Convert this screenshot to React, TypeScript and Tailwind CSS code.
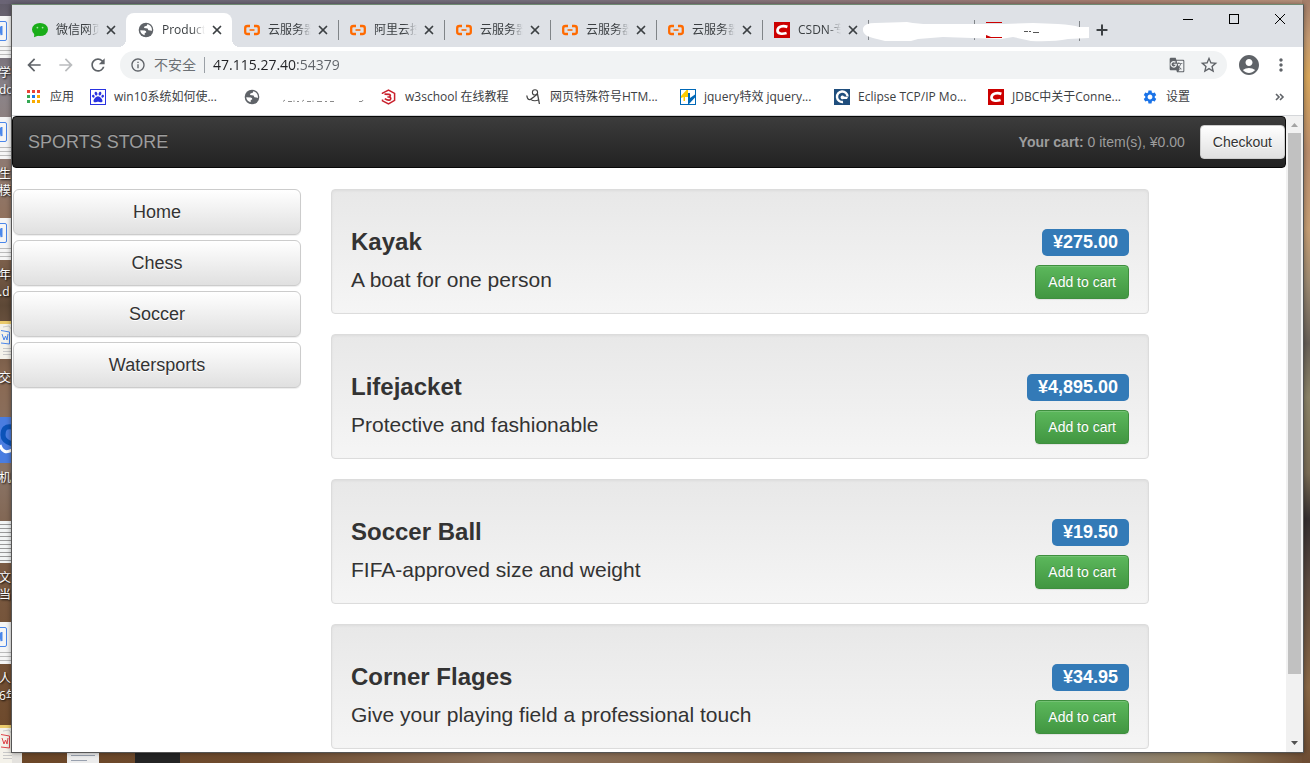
import type { ReactNode } from 'react';
import { FaPaw } from 'react-icons/fa';
import {
  MdAccountCircle,
  MdArrowBack,
  MdArrowForward,
  MdGTranslate,
  MdInfoOutline,
  MdMoreVert,
  MdRefresh,
  MdSettings,
  MdStarBorder,
} from 'react-icons/md';
import { Plus, X } from 'lucide-react';

interface Tab {
  title: string;
  icon: ReactNode;
  active?: boolean;
  divider?: boolean;
  hidden?: boolean;
}

interface Bookmark {
  title: string;
  icon: ReactNode;
  width: string;
}

interface Product {
  name: string;
  description: string;
  price: string;
}

function WeChatIcon() {
  return (
    <svg viewBox="0 0 16 16" className="w-4 h-4 flex-shrink-0">
      <ellipse cx="8" cy="7.5" rx="8" ry="6.6" fill="#1aad19" />
      <path d="M2.5 11 L2 15.2 L6.5 13.5 Z" fill="#1aad19" />
      <circle cx="5.4" cy="5.6" r="0.9" fill="#a9e5a8" />
      <circle cx="10.6" cy="5.6" r="0.9" fill="#a9e5a8" />
    </svg>
  );
}

function GlobeIcon() {
  return (
    <svg viewBox="0 0 16 16" className="w-4 h-4 flex-shrink-0">
      <circle cx="8" cy="8" r="7.3" fill="#5f6368" />
      <path d="M2.2 8.2 L6.8 8.4 Q8.6 8.8 8.2 10.6 L6.8 11 L6.6 13.2 C4.2 12.6 2.400 10.600 2.200 8.200 Z" fill="#fff" />
      <path d="M9.2 2.300 L8.8 3.8 L6.4 4.4 L6 6 L9.6 6.400 L10.4 8.2 L12.4 8.400 L13.8 9 C14.500 5.600 12.400 2.800 9.200 2.300 Z" fill="#fff" />
    </svg>
  );
}

function AliyunIcon() {
  return (
    <svg viewBox="0 0 16 16" className="w-4 h-4 flex-shrink-0" fill="none" stroke="#ff6a00">
      <path d="M6 4 H3.500 Q1.200 4 1.200 6 V10 Q1.200 12 3.500 12 H6 M10 4 H12.500 Q14.800 4 14.800 6 V10 Q14.800 12 12.500 12 H10" strokeWidth="2.3" />
      <path d="M5.5 8 H10.500" strokeWidth="1.6" />
    </svg>
  );
}

function CsdnIcon() {
  return (
    <svg viewBox="0 0 16 16" className="w-4 h-4 flex-shrink-0">
      <rect width="16" height="16" fill="#c00" />
      <path d="M13.4 4.900 C9 3.400 3.900 4.200 3.500 8.200 C3.300 12 8 12.400 12.600 11" fill="none" stroke="#fff" strokeWidth="2.7" />
    </svg>
  );
}

function AppsIcon() {
  const colors = ['#ea4335', '#ea4335', '#ea4335', '#34a853', '#1a73e8', '#f9ab00', '#34a853', '#f9ab00', '#f9ab00'];
  return (
    <svg viewBox="0 0 16 16" className="w-4 h-4 flex-shrink-0">
      {colors.map((color, i) => (
        <rect key={i} x={1 + (i % 3) * 5} y={1 + Math.floor(i / 3) * 5} width="3" height="3" fill={color} />
      ))}
    </svg>
  );
}

function BaiduIcon() {
  return (
    <span className="w-4 h-4 flex-shrink-0 border border-[#2932e1] bg-white flex items-center justify-center">
      <FaPaw className="w-3 h-3 text-[#2932e1]" />
    </span>
  );
}

function W3Icon() {
  return (
    <svg viewBox="0 0 16 16" className="w-4 h-4 flex-shrink-0" fill="none" stroke="#c9202c">
      <path d="M1.500 5 V4.200 L7.500 1 L13.600 4.400 V11.400 L7.500 15 L1.500 11.800 V10.500" strokeWidth="1.500" />
      <path d="M3.500 5.200 L8 5.400 Q10.200 6 8.800 7.800 L6.400 8 M8.400 7.900 Q10.800 9 9 11 Q6.600 11.800 3.800 9.600" strokeWidth="1.700" />
    </svg>
  );
}

function DoodleIcon() {
  return (
    <svg viewBox="0 0 16 16" className="w-4 h-4 flex-shrink-0" fill="none" stroke="#444">
      <circle cx="9" cy="3.400" r="2.600" strokeWidth="1.1" />
      <path d="M0.800 6.500 Q1.500 11.500 4.500 10.400 Q8.500 8 11.400 4.600 Q12.400 9 13.400 15" strokeWidth="1.300" />
      <path d="M4.500 10.400 Q8.500 13 12.800 10.800" strokeWidth="1.1" />
    </svg>
  );
}

function JqueryIcon() {
  return (
    <svg viewBox="0 0 16 16" className="w-4 h-4 flex-shrink-0">
      <rect x="0.5" y="0.5" width="15" height="15" fill="#fff" stroke="#0068b7" />
      <path d="M1 9 V7 L6.500 1 H8 V8 H5 V12 H3.500 V8 Z" fill="#fc0" />
      <path d="M8 4 H10 V9 L15 5.500 V8.500 L9 15 H8 Z" fill="#0068b7" />
    </svg>
  );
}

function EclipseIcon() {
  return (
    <svg viewBox="0 0 16 16" className="w-4 h-4 flex-shrink-0">
      <rect width="16" height="16" fill="#1f4e7d" />
      <path d="M13.600 7.500 A5.300 5.300 0 1 0 9 13" fill="none" stroke="#fff" strokeWidth="2.400" />
      <path d="M6.600 8 A1.900 1.900 0 0 1 10 7.400 L14 8 L13 10 H9.500 A1.900 1.900 0 0 1 6.600 8 Z" fill="#fff" />
    </svg>
  );
}

const tabs: Tab[] = [
  { title: '微信网页版', icon: <WeChatIcon /> },
  { title: 'Products', icon: <GlobeIcon />, active: true },
  { title: '云服务器', icon: <AliyunIcon /> },
  { title: '阿里云控制', icon: <AliyunIcon />, divider: true },
  { title: '云服务器', icon: <AliyunIcon />, divider: true },
  { title: '云服务器', icon: <AliyunIcon />, divider: true },
  { title: '云服务器', icon: <AliyunIcon />, divider: true },
  { title: 'CSDN-专业', icon: <CsdnIcon />, divider: true },
  { title: '', icon: null, divider: true, hidden: true },
  { title: '', icon: null, divider: true, hidden: true },
];

const bookmarks: Bookmark[] = [
  { title: '应用', icon: <AppsIcon />, width: 'w-16' },
  { title: 'win10系统如何使...', icon: <BaiduIcon />, width: 'w-[154px]' },
  { title: '', icon: <GlobeIcon />, width: 'w-[137px]' },
  { title: 'w3school 在线教程', icon: <W3Icon />, width: 'w-[145px]' },
  { title: '网页特殊符号HTM...', icon: <DoodleIcon />, width: 'w-[154px]' },
  { title: 'jquery特效 jquery...', icon: <JqueryIcon />, width: 'w-[154px]' },
  { title: 'Eclipse TCP/IP Mo...', icon: <EclipseIcon />, width: 'w-[154px]' },
  { title: 'JDBC中关于Conne...', icon: <CsdnIcon />, width: 'w-[154px]' },
  { title: '设置', icon: <MdSettings className="w-4 h-4 flex-shrink-0 text-[#1a73e8]" />, width: 'w-16' },
];

const categories = ['Home', 'Chess', 'Soccer', 'Watersports'];

const products: Product[] = [
  { name: 'Kayak', description: 'A boat for one person', price: '¥275.00' },
  { name: 'Lifejacket', description: 'Protective and fashionable', price: '¥4,895.00' },
  { name: 'Soccer Ball', description: 'FIFA-approved size and weight', price: '¥19.50' },
  { name: 'Corner Flages', description: 'Give your playing field a professional touch', price: '¥34.95' },
];

// Desktop shortcuts peeking out from behind the window, y is the top of the icon
const shortcuts = [
  { y: 16, kind: 'word', lines: ['学', 'do'] },
  { y: 117, kind: 'word', lines: ['生登', '模板'] },
  { y: 218, kind: 'word', lines: ['年', '.d'] },
  { y: 321, kind: 'folder', lines: ['交'] },
  { y: 417, kind: 'app', lines: ['机'] },
  { y: 521, kind: 'text', lines: ['文', '当.t'] },
  { y: 622, kind: 'word', lines: ['人总', '6年'] },
  { y: 725, kind: 'pdf', lines: [] },
];

function ShortcutIcon({ kind }: { kind: string }) {
  if (kind === 'word') {
    return (
      <svg width="12" height="42" fill="none">
        <rect width="12" height="42" fill="#f5f5f5" />
        <path d="M0 5.5 H5 Q6.500 5.500 6.500 7 V23 Q6.500 24.500 5 24.500 H0" stroke="#4b87ea" />
        <path d="M0 11 L1.500 19 V10" stroke="#4b87ea" strokeWidth="2" />
        <path d="M0 30.500 H12 M0 34.500 H12 M0 38.500 H12" stroke="#bbb" />
      </svg>
    );
  }
  if (kind === 'text') {
    return (
      <svg width="12" height="42">
        <rect width="12" height="42" fill="#f2f4f4" />
        <path d="M0 3.5 H12 M0 7.500 H12 M0 11.500 H12 M0 15.500 H12 M0 19.500 H12 M0 23.500 H12 M0 27.500 H12 M0 31.500 H12 M0 35.500 H12 M0 39.500 H12" stroke="#999" />
      </svg>
    );
  }
  if (kind === 'app') {
    return (
      <svg width="12" height="46" fill="none">
        <rect width="12" height="46" fill="#4a7de0" />
        <path d="M12 10 Q3 8 3 18 Q3 24 12 27" stroke="#0b53b8" strokeWidth="5" />
        <path d="M0 28 Q3 38 12 33" stroke="#fff" strokeWidth="3" />
      </svg>
    );
  }
  const color = kind === 'pdf' ? '#e0454b' : '#4b87ea';
  return (
    <svg width="12" height="42" fill="none">
      <rect width="12" height="38" fill="#f4f2ea" />
      <rect width="12" height="3" fill="#ebcb6c" />
      <path d="M3 6 L9 5 L12 9" stroke="#ccc" />
      <path d="M1 9.500 L9.500 11 V23 L1 22" stroke={color} />
      <path d="M2 13 L4 19 L5.500 15 L7 19 L8 13" stroke={color} />
      <path d="M3 27.500 H12 M3 30.500 H12 M3 33.500 H12" stroke="#c8c8c8" />
    </svg>
  );
}

function Desktop() {
  return (
    <div className="absolute inset-0" aria-hidden="true">
      <div className="absolute inset-y-0 left-0 w-3 bg-[linear-gradient(180deg,#5f5a68_0%,#8b8489_12%,#91705a_30%,#5d4836_40%,#8a6a54_50%,#8a7466_62%,#7a5a42_75%,#6b4627_100%)]" />
      <div className="absolute inset-x-0 top-0 h-1 bg-[linear-gradient(90deg,#6a6475,#77707e_40%,#94797a_70%,#a87f70_85%,#b8937c)]" />
      <div className="absolute inset-x-0 bottom-0 h-3 bg-[linear-gradient(90deg,#6b4627_0%,#6e4b2e_20%,#8d735d_38%,#7d6046_60%,#8a8580_82%,#937f5e_92%,#6d4c33)]" />
      <div className="absolute inset-y-0 right-0 w-2 bg-[linear-gradient(180deg,#a57f6b_0%,#c49a72_5%,#d9a75c_10%,#b98d6d_20%,#c69e74_30%,#9d8a72_37%,#686058_45%,#8c8468_52%,#7a6c55_62%,#352f30_68%,#5b4a40_76%,#8a6846_90%,#6d4c33)]" />
      <div className="absolute bottom-0 left-0 w-[22px] h-3 bg-[#e4e2de]" />
      <div className="absolute bottom-0 left-[67px] w-8 h-3 bg-[#ececec]">
        <div className="mt-1 mx-1 h-px bg-gray-400" />
        <div className="mt-1 ml-1 w-4 h-px bg-gray-400" />
      </div>
      <div className="absolute bottom-0 left-[135px] w-[45px] h-3 bg-[#242424]" />
      {shortcuts.map((item) => (
        <div key={item.y} className="absolute left-0 w-3 text-white" style={{ top: item.y }}>
          <ShortcutIcon kind={item.kind} />
          <div className="mt-[6px] -ml-px flex flex-col text-xs leading-[17px] whitespace-nowrap [text-shadow:1px_1px_2px_#000]">
            {item.lines.map((line) => (
              <span key={line}>{line}</span>
            ))}
          </div>
        </div>
      ))}
    </div>
  );
}

function TabItem({ tab }: { tab: Tab }) {
  return (
    <div
      className={
        tab.active
          ? 'relative flex items-center w-[106px] h-full bg-white rounded-t-lg before:absolute before:bottom-0 before:-left-2 before:w-2 before:h-2 before:bg-[radial-gradient(circle_at_0_0,transparent_8px,#fff_8px)] after:absolute after:bottom-0 after:-right-2 after:w-2 after:h-2 after:bg-[radial-gradient(circle_at_100%_0,transparent_8px,#fff_8px)]'
          : 'flex items-center w-[106px] h-full'
      }
    >
      <span className={tab.divider ? 'w-px h-5 bg-[#808488]' : 'w-px h-5'} />
      <div className="flex-1 min-w-0 flex items-center pl-[11px] pr-[7px]">
        {tab.icon}
        {!tab.hidden && (
          <>
            <span className="ml-2 mr-1 flex-1 min-w-0 overflow-hidden whitespace-nowrap text-xs text-[#3c4043] [mask-image:linear-gradient(to_right,#000_70%,transparent)]">
              {tab.title}
            </span>
            <button aria-label="Close tab" className="w-4 h-4 flex-shrink-0 flex items-center justify-center text-[#3c4043]">
              <X className="w-3.5 h-3.5" strokeWidth={3} />
            </button>
          </>
        )}
      </div>
    </div>
  );
}

function TabStrip() {
  return (
    <div className="h-[42px] bg-[#dee1e6] flex">
      <div className="relative flex pt-2 pl-2">
        {tabs.map((tab, i) => (
          <TabItem key={i} tab={tab} />
        ))}
        {/* Paint strokes over the last two tabs */}
        <svg className="absolute -right-[9px] top-4 w-[226px] h-6" viewBox="0 0 226 24" fill="#fff">
          <path d="M216.500 0 V20" stroke="#808488" />
          <path d="M0 7 Q2 2 12 2 L44 1 Q56 3 65 3 L140 3 L170 2 L195 3 Q210 4 216 6 H226 V17 L205 18 Q190 21 168 20 L150 16 L138 18 L80 16 L55 18 L48 20 H22 L10 17 Q1 15 0 10 Z" />
          <path d="M123 1.500 H139" stroke="#c00" />
          <path d="M123 14 L128 16 H139 V17 H123 Z" fill="#c00" />
          <path d="M161 10.500 H165 M166 10.500 H168 M170 11.500 H176" stroke="#555" />
        </svg>
      </div>
      <button aria-label="New tab" className="self-center mt-2 ml-[14px] w-4 h-4 text-[#3c4043]">
        <Plus className="w-4 h-4" strokeWidth={3} />
      </button>
      <div className="ml-auto mr-[17px] mt-2 flex items-start gap-[34px] text-black">
        <button aria-label="Minimize" className="w-3 h-3">
          <svg viewBox="0 0 12 12" className="w-3 h-3"><path d="M1 6.500 H11" stroke="currentColor" /></svg>
        </button>
        <button aria-label="Maximize" className="w-3 h-3">
          <svg viewBox="0 0 12 12" className="w-3 h-3"><rect x="1.500" y="1.500" width="9" height="9" fill="none" stroke="currentColor" /></svg>
        </button>
        <button aria-label="Close" className="w-3 h-3">
          <svg viewBox="0 0 12 12" className="w-3 h-3"><path d="M1 1 L11 11 M11 1 L1 11" stroke="currentColor" /></svg>
        </button>
      </div>
    </div>
  );
}

function Toolbar() {
  return (
    <div className="h-9 bg-white flex items-center pl-3 pr-3 text-[#5f6368]">
      <button aria-label="Back"><MdArrowBack className="w-5 h-5" /></button>
      <button aria-label="Forward" className="ml-3 text-[#babcbe]"><MdArrowForward className="w-5 h-5" /></button>
      <button aria-label="Reload" className="ml-3"><MdRefresh className="w-5 h-5" /></button>
      <div className="ml-3 flex-1 h-7 rounded-full bg-[#f1f3f4] flex items-center pl-[10px] pr-2 text-sm">
        <MdInfoOutline className="w-4 h-4" />
        <span className="ml-2 text-[#6c7074]">不安全</span>
        <span className="mx-2 w-px h-4 bg-[#9aa0a6]" />
        <input
          aria-label="Address"
          defaultValue="47.115.27.40:54379"
          className="flex-1 min-w-0 outline-none bg-clip-text text-transparent bg-[linear-gradient(90deg,#202124_83px,#5f6368_83px)]"
        />
        <button aria-label="Translate"><MdGTranslate className="w-4 h-4" /></button>
        <button aria-label="Bookmark" className="ml-[14px]"><MdStarBorder className="w-5 h-5" /></button>
      </div>
      <button aria-label="Profile" className="ml-[10px]"><MdAccountCircle className="w-6 h-6" /></button>
      <button aria-label="Menu" className="ml-[10px]"><MdMoreVert className="w-5 h-5" /></button>
    </div>
  );
}

function BookmarkBar() {
  return (
    <div className="bg-white border-b border-[#d5d7da] pb-1 pl-[14px] pr-[18px] flex text-xs text-[#3c4043]">
      {bookmarks.map((item, i) => (
        <a key={i} href="#" className={`${item.width} h-7 flex items-center gap-2 whitespace-nowrap`}>
          {item.icon}
          {item.title || (
            <svg className="w-[90px] h-4 ml-3" viewBox="0 0 90 16" fill="none" stroke="#8a8a8a">
              <path d="M3 12.500 L5 11 M8 12.500 H12 M14 11.500 V13 M17 12.500 H19 M22 12.500 L24 11 M27 12.500 H31 M33 11.500 V13 M37 12.500 H42 M45 12.500 H47 M50 12.500 H54 M79 12.500 H82 L83 11" />
            </svg>
          )}
        </a>
      ))}
      <button aria-label="More bookmarks" className="ml-auto h-7 text-[#5f6368]">
        <svg viewBox="0 0 10 10" className="w-[10px] h-[10px]" fill="none" stroke="currentColor" strokeWidth="1.6">
          <path d="M1 2 L4 5 L1 8 M5 2 L8 5 L5 8" />
        </svg>
      </button>
    </div>
  );
}

function NavBar() {
  return (
    <nav className="h-[52px] border border-[#080808] rounded bg-linear-to-b from-[#3c3c3c] to-[#222] flex items-center text-[#9d9d9d]">
      <a href="#" className="ml-[15px] text-lg leading-5 [text-shadow:0_-1px_0_rgba(0,0,0,0.25)]">
        SPORTS STORE
      </a>
      <p className="ml-auto text-sm">
        <b>Your cart:</b> 0 item(s), ¥0.00
      </p>
      <button className="ml-[15px] h-[34px] px-3 rounded border border-[#ccc] bg-linear-to-b from-white to-[#e0e0e0] text-sm text-[#333] [text-shadow:0_1px_0_#fff]">
        Checkout
      </button>
    </nav>
  );
}

function ProductCard({ product }: { product: Product }) {
  return (
    <div className="mb-5 p-[19px] border border-[#dcdcdc] rounded bg-linear-to-b from-[#e8e8e8] to-[#f5f5f5] shadow-[inset_0_1px_3px_rgba(0,0,0,0.05),0_1px_0_rgba(255,255,255,0.1)]">
      <h3 className="mt-5 mb-[10px] h-[26px] flex items-start justify-between text-2xl leading-[26px] font-bold">
        {product.name}
        <span className="h-[27px] px-[11px] rounded-[5px] bg-[#337ab7] text-lg leading-[26px] text-white">{product.price}</span>
      </h3>
      <div className="h-[29px] flex items-start justify-between">
        <span className="text-[21px] leading-[29px]">{product.description}</span>
        <button className="h-[34px] px-3 rounded border border-[#3e8f3e] bg-linear-to-b from-[#5cb85c] to-[#419641] text-sm text-white [text-shadow:0_-1px_0_rgba(0,0,0,0.2)] shadow-[inset_0_1px_0_rgba(255,255,255,0.15),0_1px_1px_rgba(0,0,0,0.075)]">
          Add to cart
        </button>
      </div>
    </div>
  );
}

function Store() {
  return (
    <div className="flex-1 min-w-0 overflow-hidden bg-white text-[#333] font-['Liberation_Sans',Arial,sans-serif]">
      <NavBar />
      <div className="mt-[21px] -ml-[14px] mr-4 grid grid-cols-12">
        <aside className="col-span-3 px-[15px] flex flex-col gap-[5px]">
          {categories.map((category) => (
            <a
              key={category}
              href="#"
              className="h-[46px] flex items-center justify-center rounded-md border border-[#ccc] bg-linear-to-b from-white to-[#e0e0e0] text-lg [text-shadow:0_1px_0_#fff] shadow-[inset_0_1px_0_rgba(255,255,255,0.15),0_1px_1px_rgba(0,0,0,0.075)]"
            >
              {category}
            </a>
          ))}
        </aside>
        <main className="col-span-8 px-[15px]">
          {products.map((product) => (
            <ProductCard key={product.name} product={product} />
          ))}
        </main>
      </div>
    </div>
  );
}

function ScrollBar() {
  return (
    <div className="w-[17px] bg-[#f1f1f1] flex flex-col items-center">
      <svg viewBox="0 0 17 17" className="w-[17px] h-[17px]"><path d="M5 11 L8.500 7 L12 11 Z" fill="#a3a3a3" /></svg>
      <div className="flex-1 w-full pb-[61px] px-[2px]">
        <div className="h-full bg-[#c1c1c1]" />
      </div>
      <svg viewBox="0 0 17 17" className="w-[17px] h-[17px]"><path d="M5 6 L8.500 10 L12 6 Z" fill="#505050" /></svg>
    </div>
  );
}

export default function App() {
  return (
    <div className="relative h-screen overflow-hidden bg-[#6b4627] pt-1 pl-[11px] pr-[6px] pb-[10px] flex font-['Open_Sans','Noto_Sans_CJK_SC',sans-serif]">
      <Desktop />
      <div className="relative flex-1 min-w-0 flex flex-col border border-[#555] border-t-[#6f8a72] bg-white shadow-[0_0_5px_rgba(0,0,0,0.4)]">
        <TabStrip />
        <Toolbar />
        <BookmarkBar />
        <div className="flex-1 min-h-0 flex">
          <Store />
          <ScrollBar />
        </div>
      </div>
    </div>
  );
}
